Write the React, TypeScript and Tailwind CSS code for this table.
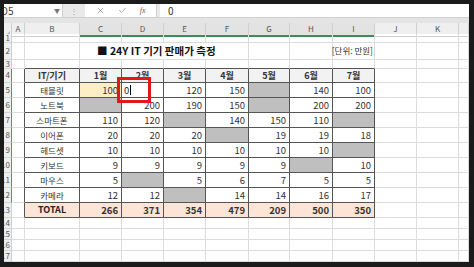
import React from 'react';
import { X, Check } from 'lucide-react';

const COLS =
  'grid grid-cols-[8px_13px_55px_42px_42px_42px_43px_41px_43px_42px_42px_42px_10px]';

const letters = ['A', 'B', 'C', 'D', 'E', 'F', 'G', 'H', 'I', 'J', 'K', ''];
const months = ['1월', '2월', '3월', '4월', '5월', '6월', '7월'];

// 'g' = 회색 셀
const data: [string, string[]][] = [
  ['태블릿', ['100', '0', '120', '150', 'g', '140', '100']],
  ['노트북', ['g', '200', '190', '150', 'g', '200', '200']],
  ['스마트폰', ['110', '120', 'g', '140', '150', '110', 'g']],
  ['이어폰', ['20', '20', '20', 'g', '19', '19', '18']],
  ['헤드셋', ['10', '10', '10', '10', '10', '10', 'g']],
  ['키보드', ['9', '9', '9', '9', '9', 'g', '10']],
  ['마우스', ['5', 'g', '5', '6', '7', '5', '5']],
  ['카메라', ['12', '12', 'g', '14', '14', '16', '17']],
];
const totals = ['266', '371', '354', '479', '209', '500', '350'];

const RowHead = ({ n, sel }: { n?: number; sel?: boolean }) => (
  <div
    className={`bg-[#efefef] border-b border-b-[#d4d4d4] border-r overflow-hidden flex items-center justify-end pr-[1px] text-[8px] text-[#555] ${
      sel ? 'border-r-[#4f9a6b]' : 'border-r-[#cfcfcf]'
    }`}
  >
    <span className="whitespace-nowrap">{n}</span>
  </div>
);

const Grid = ({ n }: { n: number }) => (
  <>
    {Array.from({ length: n }).map((_, i) => (
      <div key={i} className="border-r border-b border-[#dcdcdc]" />
    ))}
  </>
);

const PlainRow = ({ n, h }: { n: number; h: string }) => (
  <div className={`${COLS} ${h}`}>
    <RowHead n={n} />
    <Grid n={12} />
  </div>
);

const Cell = ({ v, total, row, col }: { v: string; total?: boolean; row: number; col: number }) => {
  if (v === 'g') return <div className="border-r border-b border-[#555] bg-[#bfbfbf]" />;
  if (row === 0 && col === 1)
    return (
      <div className="border-r border-b border-[#555] flex items-center pl-[2px] text-[9.5px] text-[#222]">
        0<span className="w-px h-[10px] bg-black ml-px" />
      </div>
    );
  const bg = total ? 'bg-[#fce4d6] font-bold' : row === 0 && col === 0 ? 'bg-[#fdeec6]' : '';
  return (
    <div
      className={`border-r border-b border-[#555] flex items-center justify-end pr-[3px] text-[9.5px] text-[#333] ${bg}`}
    >
      {v}
    </div>
  );
};

export default function App() {
  return (
    <div className="relative w-[474px] h-[267px] overflow-hidden bg-[#1b1b1b] pt-[4px] pl-[4px] pr-[5px] pb-[5px] font-['Noto_Sans_CJK_KR',sans-serif]">
      <div className="w-full h-full bg-white overflow-hidden flex flex-col">
        {/* 수식 입력줄 */}
        <div className="h-[13px] flex bg-[#e9e9e9] text-[#444]">
          <div className="w-[59px] bg-white flex items-center justify-between text-[10px] pr-[2px] border-r border-[#cfcfcf]">
            <span className="ml-[-3px] leading-none">D5</span>
            <span className="text-[6px] text-[#777]">▼</span>
          </div>
          <div className="w-[22px] flex items-center justify-center text-[8px] text-[#999]">⋮</div>
          <div className="w-[72px] bg-white flex items-center justify-around px-[4px] border-r border-[#cfcfcf]">
            <X size={9} strokeWidth={1.5} className="text-[#666]" />
            <Check size={9} strokeWidth={1.5} className="text-[#666]" />
            <span className="font-['Liberation_Serif',serif] italic text-[8px] text-[#666]">fx</span>
          </div>
          <div className="w-[3px]" />
          <div className="flex-1 bg-white flex items-center pl-[8px] text-[10px] text-[#333]">0</div>
        </div>
        <div className="h-[6px] bg-[#e4e4e4] border-t border-[#d0d0d0]" />

        {/* 열 머리글 */}
        <div className={`${COLS} h-[11px] bg-[#efefef] text-[8px] text-[#555]`}>
          <div className="border-r border-b border-[#cfcfcf] flex items-end justify-end p-[1px]">
            <span className="w-0 h-0 border-l-[4px] border-l-transparent border-b-[4px] border-b-[#b8b8b8]" />
          </div>
          {letters.map((l, i) => {
            const sel = i >= 2 && i <= 8;
            return (
              <div
                key={i}
                className={`flex items-center justify-center border-r border-r-[#d0d0d0] ${
                  sel ? 'bg-[#e3e3e3] border-b-2 border-b-[#3d8a5b]' : 'border-b border-b-[#cfcfcf]'
                }`}
              >
                {l}
              </div>
            );
          })}
        </div>

        {/* 1행 */}
        <PlainRow n={1} h="h-[9px]" />

        {/* 2행: 제목 */}
        <div className={`${COLS} h-[17px]`}>
          <RowHead n={2} />
          <Grid n={2} />
          <div className="col-span-4 border-r border-b border-[#dcdcdc] flex items-center pl-[17px] text-[10.5px] font-bold text-[#111] whitespace-nowrap">
            ■ 24Y IT 기기 판매가 측정
          </div>
          <Grid n={2} />
          <div className="border-r border-b border-[#dcdcdc] flex items-center justify-end pr-[1px] text-[8.5px] text-[#333] whitespace-nowrap">
            [단위: 만원]
          </div>
          <Grid n={3} />
        </div>

        {/* 3행 */}
        <div className={`${COLS} h-[9px]`}>
          <RowHead n={3} />
          <div className="border-r border-b border-[#dcdcdc]" />
          {Array.from({ length: 8 }).map((_, i) => (
            <div key={i} className="border-r border-r-[#dcdcdc] border-b border-b-[#555]" />
          ))}
          <Grid n={3} />
        </div>

        {/* 4행: 표 머리글 */}
        <div className={`${COLS} h-[15px]`}>
          <RowHead n={4} sel />
          <div className="border-r border-b border-r-[#555] border-b-[#dcdcdc]" />
          {['IT/기기', ...months].map((m) => (
            <div
              key={m}
              className="border-r border-b border-[#555] bg-[#f2f2f2] flex items-center justify-center text-[9px] font-bold text-[#333]"
            >
              {m}
            </div>
          ))}
          <Grid n={3} />
        </div>

        {data.map(([name, vals], r) => (
          <div key={name} className={`${COLS} h-[15px]`}>
            <RowHead n={5 + r} sel />
            <div className="border-r border-b border-r-[#555] border-b-[#dcdcdc]" />
            <div className="border-r border-b border-[#555] flex items-center justify-center text-[8.5px] text-[#333]">
              {name}
            </div>
            {vals.map((v, i) => (
              <Cell key={i} v={v} row={r} col={i} />
            ))}
            <Grid n={3} />
          </div>
        ))}

        {/* 13행: TOTAL */}
        <div className={`${COLS} h-[15px]`}>
          <RowHead n={13} />
          <div className="border-r border-b border-r-[#555] border-b-[#dcdcdc]" />
          <div className="border-r border-b border-[#555] bg-[#fce4d6] flex items-center justify-center text-[9px] font-bold text-[#222]">
            TOTAL
          </div>
          {totals.map((t, i) => (
            <Cell key={i} v={t} total row={9} col={i} />
          ))}
          <Grid n={3} />
        </div>

        <PlainRow n={14} h="h-[11px]" />
        <PlainRow n={15} h="h-[11px]" />
        <PlainRow n={16} h="h-[11px]" />
        <PlainRow n={17} h="h-[11px]" />
      </div>

      {/* 빨간 강조 박스 */}
      <div className="absolute left-[117px] top-[77px] w-[34px] h-[26px] border-[3px] border-[#e3161d]" />
    </div>
  );
}
